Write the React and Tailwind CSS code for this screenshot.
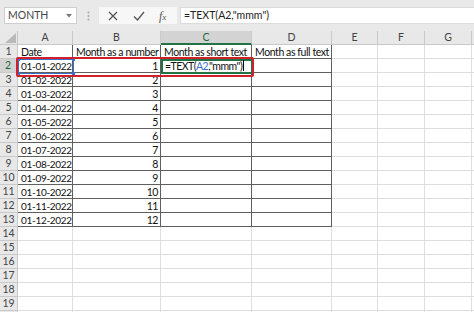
import React from "react";

const cols = ["A", "B", "C", "D", "E", "F", "G", ""];
const data = [
  ["Date", "Month as a number", "Month as short text", "Month as full text"],
  ["01-01-2022", "1", "", ""],
  ["01-02-2022", "2", "", ""],
  ["01-03-2022", "3", "", ""],
  ["01-04-2022", "4", "", ""],
  ["01-05-2022", "5", "", ""],
  ["01-06-2022", "6", "", ""],
  ["01-07-2022", "7", "", ""],
  ["01-08-2022", "8", "", ""],
  ["01-09-2022", "9", "", ""],
  ["01-10-2022", "10", "", ""],
  ["01-11-2022", "11", "", ""],
  ["01-12-2022", "12", "", ""],
];

export default function App() {
  const rows = [];
  for (let r = 1; r <= 20; r++) {
    const sel = r === 2;
    rows.push(
      <div
        key={"h" + r}
        className={
          "border-r border-b border-[#c9c9c9] flex items-center justify-center text-[10.5px] leading-none " +
          (sel ? "bg-[#d3d3d3] text-[#1e6b3e] border-r-[#217346] border-r-2" : "bg-[#e8e8e8] text-[#444]")
        }
      >
        {r <= 19 ? r : ""}
      </div>
    );
    for (let c = 0; c < 8; c++) {
      const inTable = r <= 13 && c < 4;
      const val = inTable ? data[r - 1][c] : "";
      const right = c === 1 && r > 1;
      const isDate = c === 0 && r > 1;
      rows.push(
        <div
          key={r + "-" + c}
          className={
            "border-r border-b overflow-visible whitespace-nowrap flex items-end pb-[1px] leading-none text-[#111] " +
            (inTable ? "border-[#5f5f5f] " : "border-[#dedede] ") +
            (isDate ? "text-[10px] tracking-[-0.03em] " : "text-[10.5px] tracking-[-0.04em] ") +
            (right ? "justify-end pr-[2px]" : "pl-[3px]")
          }
        >
          {val}
        </div>
      );
    }
  }

  return (
    <div className="w-[474px] h-[312px] overflow-hidden bg-white font-['Lato',sans-serif] relative">
      {/* formula bar */}
      <div className="h-[31px] bg-[#e9e9e9] flex items-start pt-[7px]">
        <div className="ml-[4px] w-[73px] h-[17px] bg-white border border-[#cfcfcf] flex items-center pl-[3px] pr-[4px] text-[10.5px] text-[#444]">
          <span className="flex-1">MONTH</span>
          <svg width="6" height="4" viewBox="0 0 6 4">
            <path d="M0 0 L6 0 L3 3.5 Z" fill="#777" />
          </svg>
        </div>
        <div className="w-[22px] h-[17px] flex items-center justify-center">
          <svg width="3" height="10" viewBox="0 0 3 10">
            <circle cx="1.5" cy="1.5" r="1" fill="#aaa" />
            <circle cx="1.5" cy="5" r="1" fill="#aaa" />
            <circle cx="1.5" cy="8.5" r="1" fill="#aaa" />
          </svg>
        </div>
        <div className="w-[78px] h-[17px] bg-[#f7f7f7] flex items-center">
          <svg width="10" height="10" viewBox="0 0 10 10" className="ml-[9px]">
            <path d="M1 1 L9 9 M9 1 L1 9" stroke="#555" strokeWidth="1.2" />
          </svg>
          <svg width="12" height="10" viewBox="0 0 12 10" className="ml-[15px]">
            <path d="M1 5.5 L4.5 9 L11 1" stroke="#555" strokeWidth="1.3" fill="none" />
          </svg>
          <span className="ml-[14px] text-[12px] italic text-[#555] font-['Liberation_Serif',serif] leading-none">
            f<span className="text-[9px]">x</span>
          </span>
        </div>
        <div className="ml-[3px] flex-1 h-[17px] bg-white border border-[#dcdcdc] border-r-0 flex items-center pl-[3px] text-[10.5px] text-[#222]">
          =TEXT(A2,"mmm")
        </div>
      </div>

      {/* grid */}
      <div className="relative">
        <div className="grid grid-cols-[18px_55px_88px_91px_80px_46px_47px_47px_40px] auto-rows-[14px]">
          <div className="bg-[#e8e8e8] border-r border-b border-[#c9c9c9] relative">
            <svg width="11" height="10" viewBox="0 0 11 10" className="absolute right-[1px] bottom-[1px]">
              <path d="M11 0 L11 10 L0 10 Z" fill="#b9b9b9" />
            </svg>
          </div>
          {cols.map((c, i) => (
            <div
              key={"c" + i}
              className={
                "flex items-center justify-center text-[10.5px] leading-none border-r border-b " +
                (c === "C"
                  ? "bg-[#d3d3d3] text-[#1e6b3e] border-r-[#c9c9c9] border-b-2 border-b-[#217346]"
                  : "bg-[#e8e8e8] text-[#444] border-[#c9c9c9]")
              }
            >
              {c}
            </div>
          ))}
          {rows}
        </div>

        {/* active cell C2 */}
        <div className="absolute left-[161px] top-[28px] w-[92px] h-[15px] border-2 border-[#217346] bg-white flex items-end pb-[1px] pl-[2px] text-[10.5px] tracking-[-0.05em] leading-none text-[#111] whitespace-nowrap">
          <span>=TEXT(</span>
          <span className="text-[#3b6fc9]">A2</span>
          <span>,"mmm")</span>
          <span className="ml-[1px] w-[1px] h-[11px] bg-black"></span>
        </div>
        {/* blue reference on A2 */}
        <div className="absolute left-[18px] top-[28px] w-[56px] h-[15px] border border-[#3b6fc9]">
          <div className="absolute -left-[2px] -top-[2px] w-[3px] h-[3px] bg-[#3b6fc9]"></div>
          <div className="absolute -right-[2px] -top-[2px] w-[3px] h-[3px] bg-[#3b6fc9]"></div>
          <div className="absolute -left-[2px] -bottom-[2px] w-[3px] h-[3px] bg-[#3b6fc9]"></div>
          <div className="absolute -right-[2px] -bottom-[2px] w-[3px] h-[3px] bg-[#3b6fc9]"></div>
        </div>
        {/* red annotation */}
        <div className="absolute left-[16px] top-[26px] w-[238px] h-[20px] border-2 border-[#d0202a] rounded-[2px]"></div>
      </div>
    </div>
  );
}
